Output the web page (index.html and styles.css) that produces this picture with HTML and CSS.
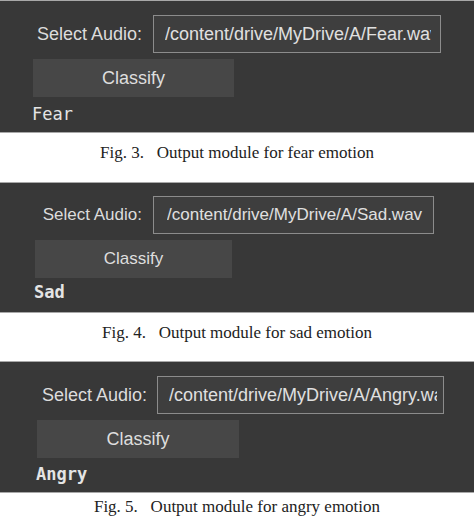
FILE: index.html
```html
<!DOCTYPE html>
<html>
<head>
<meta charset="utf-8">
<link rel="stylesheet" href="styles.css">
</head>
<body>
<section class="figure fig-fear">
  <div class="panel">
    <div class="row">
      <label class="label">Select Audio:</label>
      <div class="input"><span class="input-text">/content/drive/MyDrive/A/Fear.wav</span></div>
    </div>
    <div class="button">Classify</div>
    <div class="output">Fear</div>
  </div>
  <p class="caption">Fig. 3.&nbsp;&nbsp; Output module for fear emotion</p>
</section>
<section class="figure fig-sad">
  <div class="panel">
    <div class="row">
      <label class="label">Select Audio:</label>
      <div class="input"><span class="input-text">/content/drive/MyDrive/A/Sad.wav</span></div>
    </div>
    <div class="button">Classify</div>
    <div class="output">Sad</div>
  </div>
  <p class="caption">Fig. 4.&nbsp;&nbsp; Output module for sad emotion</p>
</section>
<section class="figure fig-angry">
  <div class="panel">
    <div class="row">
      <label class="label">Select Audio:</label>
      <div class="input"><span class="input-text">/content/drive/MyDrive/A/Angry.wav</span></div>
    </div>
    <div class="button">Classify</div>
    <div class="output">Angry</div>
  </div>
  <p class="caption">Fig. 5.&nbsp;&nbsp; Output module for angry emotion</p>
</section>
</body>
</html>
```

FILE: styles.css
```css
html, body {
  margin: 0;
  padding: 0;
  background: #ffffff;
}

.figure {
  display: flex;
  flex-direction: column;
}

.panel {
  background: #383838;
  border-top: 1px solid #a8a8a8;
  border-bottom: 1px solid #a8a8a8;
  padding: 14px 0 0 33px;
  box-sizing: border-box;
  display: flex;
  flex-direction: column;
  font-family: "Liberation Sans", Arial, sans-serif;
  color: #dcdcdc;
}

.row {
  display: flex;
  align-items: center;
  height: 38px;
}

.label {
  width: 120px;
  box-sizing: border-box;
  padding-right: 11px;
  text-align: right;
  font-size: 18px;
  white-space: nowrap;
}

.input {
  width: 288px;
  height: 38px;
  box-sizing: border-box;
  border: 1px solid #8c8c8c;
  background: #3e3e3e;
  padding: 0 9px 0 11px;
  display: flex;
  align-items: center;
  font-size: 18px;
  color: #e0e0e0;
}

.input-text {
  flex: 1;
  min-width: 0;
  overflow: hidden;
  white-space: nowrap;
  line-height: 36px;
}

.button {
  margin-top: 6px;
  width: 201px;
  height: 38px;
  background: #474747;
  display: flex;
  align-items: center;
  justify-content: center;
  font-size: 18px;
  color: #dedede;
}

.output {
  font-family: "DejaVu Sans Mono", monospace;
  font-size: 17px;
  line-height: 22px;
  margin-top: 6px;
  margin-left: -1px;
  color: #e4e4e4;
}

.caption {
  margin: 0;
  text-align: center;
  font-family: "Liberation Serif", "Times New Roman", serif;
  font-size: 17px;
  color: #222;
  white-space: pre;
}

.fig-fear .panel { height: 133px; }
.fig-fear .caption { height: 49px; line-height: 40px; }

.fig-sad .panel { height: 131px; padding-left: 35px; padding-top: 13px; }
.fig-sad .label { width: 118px; font-size: 17px; }
.fig-sad .input { width: 281px; font-size: 17px; padding-left: 13px; padding-right: 6px; }
.fig-sad .button { width: 197px; font-size: 17px; }
.fig-sad .output { font-weight: bold; margin-top: 3px; }
.fig-sad .caption { height: 48px; line-height: 40px; }

.fig-angry .panel { height: 132px; padding-left: 37px; }
.fig-angry .label { width: 120px; padding-right: 10px; }
.fig-angry .input { width: 287px; padding-right: 6px; }
.fig-angry .button { width: 202px; }
.fig-angry .output { font-weight: bold; margin-top: 5px; }
.fig-angry .caption { height: 29px; line-height: 28px; }
```
